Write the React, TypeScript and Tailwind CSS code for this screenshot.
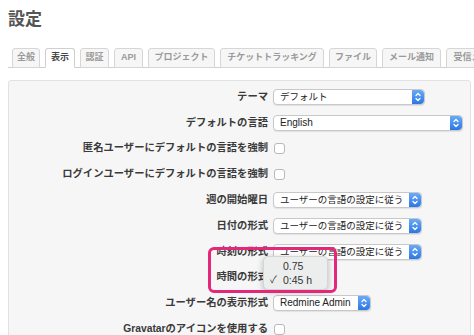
const font = { fontFamily: '"Liberation Sans", "Noto Sans CJK JP", sans-serif' }

const tabs: { label: string; w: string; active?: boolean }[] = [
  { label: '全般', w: 'w-[28px]' },
  { label: '表示', w: 'w-[30px]', active: true },
  { label: '認証', w: 'w-[29px]' },
  { label: 'API', w: 'w-[29px]' },
  { label: 'プロジェクト', w: 'w-[67px]' },
  { label: 'チケットトラッキング', w: 'w-[104px]' },
  { label: 'ファイル', w: 'w-[48px]' },
  { label: 'メール通知', w: 'w-[59px]' },
  { label: '受信メール', w: 'w-[60px]' },
]

function Arrows() {
  return (
    <span className="flex h-full w-[12px] shrink-0 items-center justify-center rounded-r-[4px] bg-gradient-to-b from-[#69aaf8] to-[#2c76e6]">
      <svg width="6" height="10" viewBox="0 0 6 10" fill="none" stroke="white" strokeWidth="1.3" strokeLinecap="round" strokeLinejoin="round">
        <path d="M1 3.5 L3 1.5 L5 3.5" />
        <path d="M1 6.5 L3 8.5 L5 6.5" />
      </svg>
    </span>
  )
}

function Select({ value, w, cjk = false }: { value: string; w: string; cjk?: boolean }) {
  return (
    <div className={`flex h-[16px] items-center rounded-[4px] border border-[#c8c8c8] bg-white shadow-[0_1px_1px_rgba(0,0,0,0.08)] ${w}`}>
      <span className={`flex-1 overflow-hidden whitespace-nowrap pl-[6px] leading-none text-[#222] ${cjk ? 'text-[9.5px]' : 'text-[10px]'}`}>{value}</span>
      <Arrows />
    </div>
  )
}

function Check() {
  return <div className="ml-[1px] size-[11px] rounded-[3px] border border-[#b9b9b9] bg-white" />
}

function Row({ label, children }: { label: string; children?: React.ReactNode }) {
  return (
    <div className="flex h-[25.8px] items-center">
      <div className="w-[259px] text-right text-[10.3px] font-bold leading-none text-[#3a3a3a]">{label}</div>
      <div className="ml-[5px] flex items-center">{children}</div>
    </div>
  )
}

export default function App() {
  return (
    <div className="relative h-[335px] w-[474px] overflow-hidden bg-white" style={font}>
      <div className="px-[8px] pt-[10px]">
        <h2 className="text-[17px] font-bold leading-[20px] text-[#555]">設定</h2>
        <div className="mt-[18px] flex gap-[5px] border-b border-[#cfcfcf] pl-[4px]">
          {tabs.map((t) => (
            <div
              key={t.label}
              className={`-mb-px flex h-[20px] shrink-0 items-center justify-center whitespace-nowrap rounded-t-[3px] border text-[9px] font-bold ${t.w} ${
                t.active ? 'border-[#cfcfcf] border-b-white bg-white text-[#444]' : 'border-[#d6d6d6] bg-[#f6f6f6] text-[#9a9a9a]'
              }`}
            >
              {t.label}
            </div>
          ))}
        </div>
        <div className="mt-[12px] h-[300px] w-[463px] rounded-[3px] border border-[#e2e2e2] bg-[#f6f6f6] pt-[3px]">
          <Row label="テーマ"><Select value="デフォルト" w="w-[152px]" cjk /></Row>
          <Row label="デフォルトの言語"><Select value="English" w="w-[190px]" /></Row>
          <Row label="匿名ユーザーにデフォルトの言語を強制"><Check /></Row>
          <Row label="ログインユーザーにデフォルトの言語を強制"><Check /></Row>
          <Row label="週の開始曜日"><Select value="ユーザーの言語の設定に従う" w="w-[149px]" cjk /></Row>
          <Row label="日付の形式"><Select value="ユーザーの言語の設定に従う" w="w-[149px]" cjk /></Row>
          <Row label="時刻の形式"><Select value="ユーザーの言語の設定に従う" w="w-[149px]" cjk /></Row>
          <Row label="時間の形式"><Select value="" w="w-[50px]" /></Row>
          <Row label="ユーザー名の表示形式"><Select value="Redmine Admin" w="w-[98px]" /></Row>
          <Row label="Gravatarのアイコンを使用する"><Check /></Row>
        </div>
      </div>

      <div className="absolute left-[263px] top-[256px] w-[65px] rounded-[5px] border border-[#d4d6d6] bg-[#eceeee] py-[2px] text-[10.5px] leading-[14px] text-[#333] shadow-[0_2px_6px_rgba(0,0,0,0.25)]">
        <div className="pl-[19px]">0.75</div>
        <div className="flex items-center">
          <span className="w-[19px] pl-[6px] text-[10px]">✓</span>
          <span>0:45 h</span>
        </div>
      </div>

      <div className="absolute left-[208px] top-[247px] h-[46px] w-[129px] rounded-[6px] border-[3px] border-[#e3277b]" />
    </div>
  )
}
